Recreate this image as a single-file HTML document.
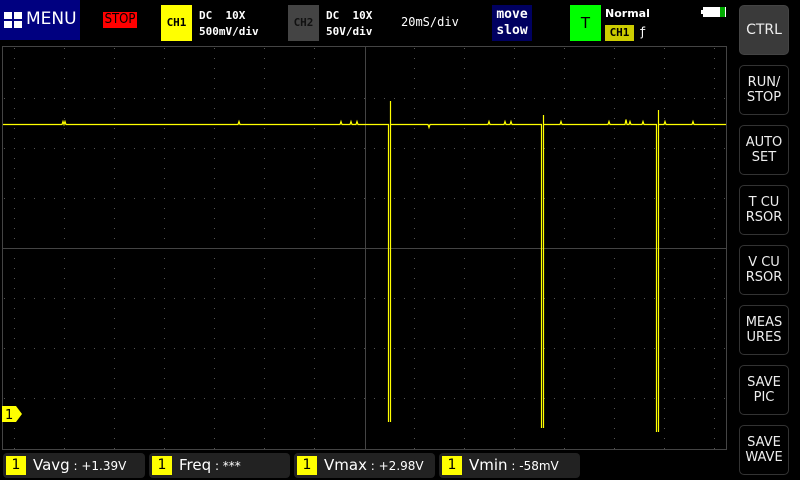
<!DOCTYPE html><html><head><style>
body{margin:0;width:800px;height:480px;background:#000;overflow:hidden;font-family:"DejaVu Sans Mono","Liberation Mono",monospace;color:#fff;position:relative}
.a{position:absolute}
.btn{position:absolute;left:739px;width:50px;height:50px;border:1px solid #333;border-radius:5px;box-sizing:border-box;display:flex;align-items:center;justify-content:center;text-align:center;font-family:"DejaVu Sans",sans-serif;font-size:13px;line-height:15px;color:#eee}
.m{position:absolute;top:453px;height:25px;background:#222;border-radius:4px;font-size:15px;line-height:25px;font-family:"DejaVu Sans",sans-serif}
.m b{position:absolute;left:3px;top:3px;width:20px;height:19px;background:#ff0;color:#000;font-weight:normal;text-align:center;line-height:19px;font-size:14px}
.m span{position:absolute;left:30px}
</style></head><body>
<div class="a" style="left:0;top:0;width:80px;height:40px;background:#000080;"></div>
<svg class="a" style="left:4px;top:12px" width="18" height="16"><rect x="0" y="0" width="8" height="7" fill="#fff"/><rect x="10" y="0" width="8" height="7" fill="#fff"/><rect x="0" y="9" width="8" height="7" fill="#fff"/><rect x="10" y="9" width="8" height="7" fill="#fff"/></svg>
<div class="a" style="left:26px;top:9px;font-family:'DejaVu Sans',sans-serif;font-size:17px">MENU</div>
<div class="a" style="left:103px;top:12px;width:34px;height:16px;background:#f00;color:#000;font-size:13px;line-height:16px;text-align:center;font-family:'DejaVu Sans Condensed','DejaVu Sans',sans-serif">STOP</div>
<div class="a" style="left:161px;top:5px;width:31px;height:36px;background:#ff0;color:#000;font-size:11px;line-height:36px;text-align:center;font-weight:bold">CH1</div>
<div class="a" style="left:199px;top:8px;font-size:11px;line-height:16px;font-weight:bold">DC&nbsp;&nbsp;10X<br>500mV/div</div>
<div class="a" style="left:288px;top:5px;width:31px;height:36px;background:#444;color:#111;font-size:11px;line-height:36px;text-align:center;font-weight:bold">CH2</div>
<div class="a" style="left:326px;top:8px;font-size:11px;line-height:16px;font-weight:bold">DC&nbsp;&nbsp;10X<br>50V/div</div>
<div class="a" style="left:401px;top:15px;font-size:12px">20mS/div</div>
<div class="a" style="left:492px;top:5px;width:40px;height:36px;background:#000060;font-size:13px;line-height:16px;text-align:center;font-weight:bold;padding-top:2px;box-sizing:border-box">move<br>slow</div>
<div class="a" style="left:570px;top:5px;width:31px;height:36px;background:#0f0;color:#000;font-size:15px;line-height:36px;text-align:center;font-family:'DejaVu Sans',sans-serif">T</div>
<div class="a" style="left:605px;top:7px;font-size:11px;font-weight:bold;font-family:'DejaVu Sans',sans-serif">Normal</div>
<div class="a" style="left:605px;top:25px;width:29px;height:16px;background:#cc0;color:#000;font-size:11px;line-height:16px;text-align:center;font-weight:bold">CH1</div>
<div class="a" style="left:639px;top:25px;font-size:12px">ƒ</div>
<div class="a" style="left:703px;top:7px;width:23px;height:10px;background:#fff"></div>
<div class="a" style="left:720px;top:7px;width:5px;height:10px;background:#0a0"></div>
<div class="a" style="left:701px;top:10px;width:2px;height:4px;background:#fff"></div>
<div class="btn" style="top:5px;background:#3a3a3a;border-color:#444;font-size:14px">CTRL</div>
<div class="btn" style="top:65px">RUN/<br>STOP</div>
<div class="btn" style="top:125px">AUTO<br>SET</div>
<div class="btn" style="top:185px">T CU<br>RSOR</div>
<div class="btn" style="top:245px">V CU<br>RSOR</div>
<div class="btn" style="top:305px">MEAS<br>URES</div>
<div class="btn" style="top:365px">SAVE<br>PIC</div>
<div class="btn" style="top:425px">SAVE<br>WAVE</div>
<svg class="a" style="left:0;top:0" width="730" height="452">
<rect x="2.5" y="46.5" width="724" height="403" fill="none" stroke="#444"/>
<g stroke="#555" stroke-width="1" stroke-dasharray="1 9">
<path d="M14.5 48V449M64.5 48V449M114.5 48V449M164.5 48V449M214.5 48V449M264.5 48V449M314.5 48V449M414.5 48V449M464.5 48V449M514.5 48V449M564.5 48V449M614.5 48V449M664.5 48V449M714.5 48V449"/>
<path d="M4 98.5H726M4 148.5H726M4 198.5H726M4 298.5H726M4 348.5H726M4 398.5H726"/>
</g>
<path d="M365.5 47V449M3 248.5H726" stroke="#444"/>
<path d="M3 124.5H62l1-3 1 3 1-3 1 3H238l1-3 1 3H340l1-3 1 3H350l1-3 1 3H356l1-3 1 3H388.5V422M390.5 422V101M390.5 124.5H428l1 3 1-3H488l1-3 1 3H504l1-3 1 3H510l1-3 1 3H541.5V428M543.5 428V115M543.5 124.5H560l1-3 1 3H608l1-3 1 3H625l1-5 1 5H629l1-3 1 3H642l1-3 1 3H656.5V432M658.5 432V110M658.5 124.5H664l1-3 1 3H692l1-3 1 3H726" fill="none" stroke="#ff0" stroke-width="1.2"/>
</svg>
<svg class="a" style="left:2px;top:406px" width="20" height="16"><path d="M0 0H14L20 8L14 16H0Z" fill="#ff0"/><text x="3" y="13" font-size="13" font-family="DejaVu Sans" fill="#000">1</text></svg>
<div class="m" style="left:3px;width:142px"><b>1</b><span>Vavg<small style="font-size:12px"> : +1.39V</small></span></div>
<div class="m" style="left:149px;width:141px"><b>1</b><span>Freq<small style="font-size:12px"> : ***</small></span></div>
<div class="m" style="left:294px;width:141px"><b>1</b><span>Vmax<small style="font-size:12px"> : +2.98V</small></span></div>
<div class="m" style="left:439px;width:141px"><b>1</b><span>Vmin<small style="font-size:12px"> : -58mV</small></span></div>
</body></html>
